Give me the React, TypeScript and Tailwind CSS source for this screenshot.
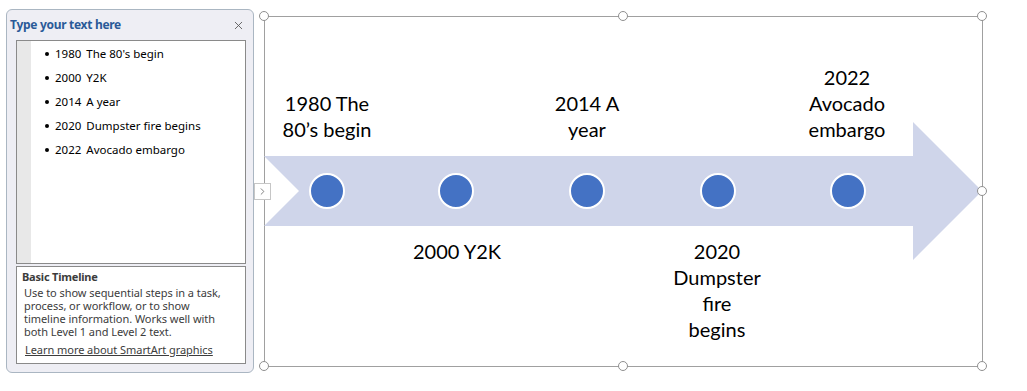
import { X, ChevronRight } from "lucide-react";

const paneItems = [
  { year: "1980", text: "The 80's begin" },
  { year: "2000", text: "Y2K" },
  { year: "2014", text: "A year" },
  { year: "2020", text: "Dumpster fire begins" },
  { year: "2022", text: "Avocado embargo" },
];

// label lines per timeline column; top = above the arrow
const columns: { top: boolean; lines: string[] }[] = [
  { top: true, lines: ["1980 The", "80’s begin"] },
  { top: false, lines: ["2000 Y2K"] },
  { top: true, lines: ["2014 A", "year"] },
  { top: false, lines: ["2020", "Dumpster", "fire", "begins"] },
  { top: true, lines: ["2022", "Avocado", "embargo"] },
];

const dotX = [63, 192, 323, 454, 584];

const handles = [
  "left-[-1px] top-[-1px]",
  "left-[358px] top-[-1px]",
  "left-[717px] top-[-1px]",
  "left-[-1px] top-[174px]",
  "left-[717px] top-[174px]",
  "left-[-1px] top-[349px]",
  "left-[358px] top-[349px]",
  "left-[717px] top-[349px]",
];

function TextPane() {
  return (
    <div className="ml-[6px] mt-[9px] flex h-[364px] w-[248px] shrink-0 flex-col rounded-[6px] border border-[#aab6c2] bg-[#eeeef4] pb-[8px] font-['Noto_Sans',sans-serif]">
      {/* Header */}
      <div className="flex h-[30px] items-center justify-between pl-[3px] pr-[8px]">
        <span className="text-[12px] font-bold tracking-[-0.3px] text-[#2a5a98]">
          Type your text here
        </span>
        <X size={13} strokeWidth={1.6} className="text-[#555]" />
      </div>

      {/* Text entry */}
      <div className="ml-[9px] flex h-[224px] w-[230px] border border-[#8a8a8a] bg-white">
        <div className="w-[14px] bg-[#e8e8e8]" />
        <ul className="pt-[1px] pl-[14px]">
          {paneItems.map((item) => (
            <li
              key={item.year}
              className="flex h-[24px] items-center text-[11.5px] text-black"
            >
              <span className="mr-[6px] h-[4px] w-[4px] rounded-full bg-black" />
              <span className="mr-[5px]">{item.year}</span>
              <span>{item.text}</span>
            </li>
          ))}
        </ul>
      </div>

      {/* Description */}
      <div className="ml-[9px] mt-[2px] flex-1 w-[230px] border border-[#8a8a8a] bg-white px-[5px] pt-[2px] text-[#3c3c3c]">
        <p className="text-[11px] font-bold leading-[16px] tracking-[-0.2px]">
          Basic Timeline
        </p>
        <p className="mt-[1px] pl-[2px] text-[11px] leading-[13px] tracking-[-0.05px]">
          Use to show sequential steps in a task,
          <br />
          process, or workflow, or to show
          <br />
          timeline information. Works well with
          <br />
          both Level 1 and Level 2 text.
        </p>
        <p className="mt-[5px] pl-[3px] text-[11px] leading-[14px] tracking-[-0.05px] underline">
          Learn more about SmartArt graphics
        </p>
      </div>
    </div>
  );
}

function Label({ lines }: { lines: string[] }) {
  return (
    <p className="whitespace-nowrap text-center text-[20px] leading-[26px] text-black">
      {lines.map((l, i) => (
        <span key={i} className="block">
          {l}
        </span>
      ))}
    </p>
  );
}

function Timeline() {
  return (
    <div className="relative ml-[10px] mt-[16px] h-[351px] w-[719px] shrink-0 border border-[#a0a0a0] font-['Lato',sans-serif]">
      <svg
        className="absolute left-[-1px] top-[-1px]"
        width={719}
        height={351}
        viewBox="0 0 719 351"
      >
        <polygon
          points="0,140 649,140 649,106 718,175 649,244 649,210 0,210 35,175"
          fill="#cfd5ea"
        />
        {dotX.map((x) => (
          <circle key={x} cx={x} cy={175} r={17} fill="#4472c4" stroke="#fff" strokeWidth={2} />
        ))}
      </svg>

      <div className="relative flex flex-col">
        {/* labels above the arrow */}
        <div className="ml-[-3px] flex h-[125px]">
          {columns.map((c, i) => (
            <div key={i} className="flex w-[130px] items-end justify-center">
              {c.top && <Label lines={c.lines} />}
            </div>
          ))}
        </div>
        {/* labels below the arrow */}
        <div className="ml-[-3px] mt-[96px] flex">
          {columns.map((c, i) => (
            <div key={i} className="flex w-[130px] justify-center">
              {!c.top && <Label lines={c.lines} />}
            </div>
          ))}
        </div>
      </div>

      {handles.map((h) => (
        <span
          key={h}
          className={`absolute ${h} h-[10px] w-[10px] -translate-x-1/2 -translate-y-1/2 rounded-full border-[1.5px] border-[#8f8f8f] bg-white`}
        />
      ))}
    </div>
  );
}

export default function App() {
  return (
    <div className="relative flex h-[391px] w-[1027px] items-start bg-white">
      <TextPane />
      <Timeline />
      <button className="absolute left-[254px] top-[183px] flex h-[17px] w-[17px] items-center justify-center border border-[#c6c6c6] bg-white">
        <ChevronRight size={11} strokeWidth={2} className="text-[#777]" />
      </button>
    </div>
  );
}
